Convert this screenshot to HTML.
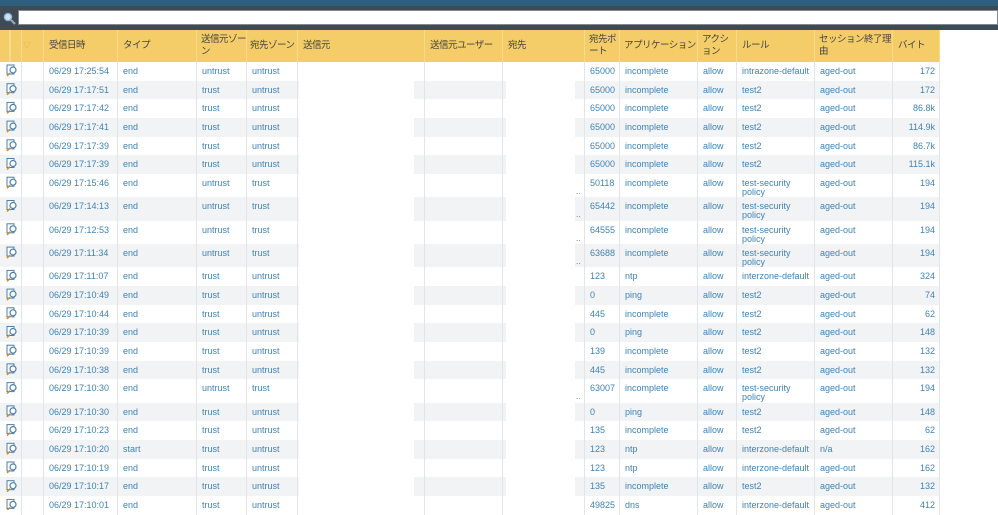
<!DOCTYPE html>
<html><head><meta charset="utf-8"><style>
*{margin:0;padding:0;box-sizing:border-box}
body{width:998px;height:510px;overflow:hidden;background:#fff;font-family:"Liberation Sans","Noto Sans CJK JP",sans-serif;position:relative}
.top{position:absolute;left:0;top:0;width:998px;height:8px;background:#2f5f80}
.bar{position:absolute;left:0;top:6px;width:998px;height:24px;background:#3e4a54}
.inp{position:absolute;left:18px;top:10px;width:980px;height:15px;background:#fff;border:1px solid #7f8a93}
.hdr{position:absolute;left:0;top:30px;width:940px;height:32px;background:#f4cd68;display:flex}
.hdr div{border-right:1px solid #f8dc8c;font-size:9.5px;letter-spacing:-0.5px;color:#444;padding:0 0 0 5px;line-height:12px;height:32px;display:flex;align-items:center;white-space:nowrap;overflow:hidden}
.row{display:flex;width:940px}
.row div{border-right:1px solid #e2e4e7;font-size:9px;color:#3f82b5;padding:0 0 0 5px;line-height:9px;padding-top:5px;overflow:visible;white-space:nowrap;position:relative}
.row.g{background:#f2f3f5}
.row div.r{text-align:right;padding-right:4px}
.tall{height:23.3px}.n{height:18.7px}
.w{position:absolute;top:62px;height:448px;background:#fff}
.dots{position:absolute;left:-9px;top:15px;color:#666;font-size:8px;line-height:6px}
</style></head><body>
<div class="top"></div><div class="bar"></div><div class="inp"></div>
<svg style="position:absolute;left:3px;top:12px" width="13" height="13" viewBox="0 0 13 13"><circle cx="5" cy="5" r="3.6" fill="#cfe3f3" stroke="#8fb6d6" stroke-width="1.4"/><line x1="8" y1="8" x2="12" y2="12" stroke="#9aa" stroke-width="2.2"/></svg>
<div class="hdr">
<div style="width:22px;padding:0"><span style="display:block;width:2px;height:32px;background:#f8dc8c;margin-left:9px"></span></div>
<div style="width:22px;color:#e8a940;font-size:8px;padding-left:1px">▽</div>
<div style="width:74px">受信日時</div><div style="width:79px">タイプ</div><div style="width:50px;padding-left:4px">送信元ゾー<br>ン</div><div style="width:51px;padding-left:3px">宛先ゾーン</div><div style="width:127px">送信元</div><div style="width:78px">送信元ユーザー</div><div style="width:82px">宛先</div><div style="width:35px;padding-left:4px">宛先ポ<br>ート</div><div style="width:78px;padding-left:4px">アプリケーション</div><div style="width:39px;padding-left:4px">アクシ<br>ョン</div><div style="width:78px">ルール</div><div style="width:78px;padding-left:4px">セッション終了理<br>由</div><div style="width:47px">バイト</div>
</div>
<div style="position:absolute;left:0;top:62px">
<div class="row n"><div style="width:22px"></div><div style="width:22px"></div><div style="width:74px">06/29 17:25:54</div><div style="width:79px">end</div><div style="width:50px">untrust</div><div style="width:51px">untrust</div><div style="width:127px"></div><div style="width:78px"></div><div style="width:82px"></div><div style="width:35px">65000</div><div style="width:78px">incomplete</div><div style="width:39px">allow</div><div style="width:78px">intrazone-default</div><div style="width:78px">aged-out</div><div style="width:47px" class="r">172</div></div>
<div class="row n g"><div style="width:22px"></div><div style="width:22px"></div><div style="width:74px">06/29 17:17:51</div><div style="width:79px">end</div><div style="width:50px">trust</div><div style="width:51px">untrust</div><div style="width:127px"></div><div style="width:78px"></div><div style="width:82px"></div><div style="width:35px">65000</div><div style="width:78px">incomplete</div><div style="width:39px">allow</div><div style="width:78px">test2</div><div style="width:78px">aged-out</div><div style="width:47px" class="r">172</div></div>
<div class="row n"><div style="width:22px"></div><div style="width:22px"></div><div style="width:74px">06/29 17:17:42</div><div style="width:79px">end</div><div style="width:50px">trust</div><div style="width:51px">untrust</div><div style="width:127px"></div><div style="width:78px"></div><div style="width:82px"></div><div style="width:35px">65000</div><div style="width:78px">incomplete</div><div style="width:39px">allow</div><div style="width:78px">test2</div><div style="width:78px">aged-out</div><div style="width:47px" class="r">86.8k</div></div>
<div class="row n g"><div style="width:22px"></div><div style="width:22px"></div><div style="width:74px">06/29 17:17:41</div><div style="width:79px">end</div><div style="width:50px">trust</div><div style="width:51px">untrust</div><div style="width:127px"></div><div style="width:78px"></div><div style="width:82px"></div><div style="width:35px">65000</div><div style="width:78px">incomplete</div><div style="width:39px">allow</div><div style="width:78px">test2</div><div style="width:78px">aged-out</div><div style="width:47px" class="r">114.9k</div></div>
<div class="row n"><div style="width:22px"></div><div style="width:22px"></div><div style="width:74px">06/29 17:17:39</div><div style="width:79px">end</div><div style="width:50px">trust</div><div style="width:51px">untrust</div><div style="width:127px"></div><div style="width:78px"></div><div style="width:82px"></div><div style="width:35px">65000</div><div style="width:78px">incomplete</div><div style="width:39px">allow</div><div style="width:78px">test2</div><div style="width:78px">aged-out</div><div style="width:47px" class="r">86.7k</div></div>
<div class="row n g"><div style="width:22px"></div><div style="width:22px"></div><div style="width:74px">06/29 17:17:39</div><div style="width:79px">end</div><div style="width:50px">trust</div><div style="width:51px">untrust</div><div style="width:127px"></div><div style="width:78px"></div><div style="width:82px"></div><div style="width:35px">65000</div><div style="width:78px">incomplete</div><div style="width:39px">allow</div><div style="width:78px">test2</div><div style="width:78px">aged-out</div><div style="width:47px" class="r">115.1k</div></div>
<div class="row tall"><div style="width:22px"></div><div style="width:22px"></div><div style="width:74px">06/29 17:15:46</div><div style="width:79px">end</div><div style="width:50px">untrust</div><div style="width:51px">trust</div><div style="width:127px"></div><div style="width:78px"></div><div style="width:82px"></div><div style="width:35px"><span class="dots">..</span>50118</div><div style="width:78px">incomplete</div><div style="width:39px">allow</div><div style="width:78px">test-security<br>policy</div><div style="width:78px">aged-out</div><div style="width:47px" class="r">194</div></div>
<div class="row tall g"><div style="width:22px"></div><div style="width:22px"></div><div style="width:74px">06/29 17:14:13</div><div style="width:79px">end</div><div style="width:50px">untrust</div><div style="width:51px">trust</div><div style="width:127px"></div><div style="width:78px"></div><div style="width:82px"></div><div style="width:35px"><span class="dots">..</span>65442</div><div style="width:78px">incomplete</div><div style="width:39px">allow</div><div style="width:78px">test-security<br>policy</div><div style="width:78px">aged-out</div><div style="width:47px" class="r">194</div></div>
<div class="row tall"><div style="width:22px"></div><div style="width:22px"></div><div style="width:74px">06/29 17:12:53</div><div style="width:79px">end</div><div style="width:50px">untrust</div><div style="width:51px">trust</div><div style="width:127px"></div><div style="width:78px"></div><div style="width:82px"></div><div style="width:35px"><span class="dots">..</span>64555</div><div style="width:78px">incomplete</div><div style="width:39px">allow</div><div style="width:78px">test-security<br>policy</div><div style="width:78px">aged-out</div><div style="width:47px" class="r">194</div></div>
<div class="row tall g"><div style="width:22px"></div><div style="width:22px"></div><div style="width:74px">06/29 17:11:34</div><div style="width:79px">end</div><div style="width:50px">untrust</div><div style="width:51px">trust</div><div style="width:127px"></div><div style="width:78px"></div><div style="width:82px"></div><div style="width:35px"><span class="dots">..</span>63688</div><div style="width:78px">incomplete</div><div style="width:39px">allow</div><div style="width:78px">test-security<br>policy</div><div style="width:78px">aged-out</div><div style="width:47px" class="r">194</div></div>
<div class="row n"><div style="width:22px"></div><div style="width:22px"></div><div style="width:74px">06/29 17:11:07</div><div style="width:79px">end</div><div style="width:50px">trust</div><div style="width:51px">untrust</div><div style="width:127px"></div><div style="width:78px"></div><div style="width:82px"></div><div style="width:35px">123</div><div style="width:78px">ntp</div><div style="width:39px">allow</div><div style="width:78px">interzone-default</div><div style="width:78px">aged-out</div><div style="width:47px" class="r">324</div></div>
<div class="row n g"><div style="width:22px"></div><div style="width:22px"></div><div style="width:74px">06/29 17:10:49</div><div style="width:79px">end</div><div style="width:50px">trust</div><div style="width:51px">untrust</div><div style="width:127px"></div><div style="width:78px"></div><div style="width:82px"></div><div style="width:35px">0</div><div style="width:78px">ping</div><div style="width:39px">allow</div><div style="width:78px">test2</div><div style="width:78px">aged-out</div><div style="width:47px" class="r">74</div></div>
<div class="row n"><div style="width:22px"></div><div style="width:22px"></div><div style="width:74px">06/29 17:10:44</div><div style="width:79px">end</div><div style="width:50px">trust</div><div style="width:51px">untrust</div><div style="width:127px"></div><div style="width:78px"></div><div style="width:82px"></div><div style="width:35px">445</div><div style="width:78px">incomplete</div><div style="width:39px">allow</div><div style="width:78px">test2</div><div style="width:78px">aged-out</div><div style="width:47px" class="r">62</div></div>
<div class="row n g"><div style="width:22px"></div><div style="width:22px"></div><div style="width:74px">06/29 17:10:39</div><div style="width:79px">end</div><div style="width:50px">trust</div><div style="width:51px">untrust</div><div style="width:127px"></div><div style="width:78px"></div><div style="width:82px"></div><div style="width:35px">0</div><div style="width:78px">ping</div><div style="width:39px">allow</div><div style="width:78px">test2</div><div style="width:78px">aged-out</div><div style="width:47px" class="r">148</div></div>
<div class="row n"><div style="width:22px"></div><div style="width:22px"></div><div style="width:74px">06/29 17:10:39</div><div style="width:79px">end</div><div style="width:50px">trust</div><div style="width:51px">untrust</div><div style="width:127px"></div><div style="width:78px"></div><div style="width:82px"></div><div style="width:35px">139</div><div style="width:78px">incomplete</div><div style="width:39px">allow</div><div style="width:78px">test2</div><div style="width:78px">aged-out</div><div style="width:47px" class="r">132</div></div>
<div class="row n g"><div style="width:22px"></div><div style="width:22px"></div><div style="width:74px">06/29 17:10:38</div><div style="width:79px">end</div><div style="width:50px">trust</div><div style="width:51px">untrust</div><div style="width:127px"></div><div style="width:78px"></div><div style="width:82px"></div><div style="width:35px">445</div><div style="width:78px">incomplete</div><div style="width:39px">allow</div><div style="width:78px">test2</div><div style="width:78px">aged-out</div><div style="width:47px" class="r">132</div></div>
<div class="row tall"><div style="width:22px"></div><div style="width:22px"></div><div style="width:74px">06/29 17:10:30</div><div style="width:79px">end</div><div style="width:50px">untrust</div><div style="width:51px">trust</div><div style="width:127px"></div><div style="width:78px"></div><div style="width:82px"></div><div style="width:35px"><span class="dots">..</span>63007</div><div style="width:78px">incomplete</div><div style="width:39px">allow</div><div style="width:78px">test-security<br>policy</div><div style="width:78px">aged-out</div><div style="width:47px" class="r">194</div></div>
<div class="row n g"><div style="width:22px"></div><div style="width:22px"></div><div style="width:74px">06/29 17:10:30</div><div style="width:79px">end</div><div style="width:50px">trust</div><div style="width:51px">untrust</div><div style="width:127px"></div><div style="width:78px"></div><div style="width:82px"></div><div style="width:35px">0</div><div style="width:78px">ping</div><div style="width:39px">allow</div><div style="width:78px">test2</div><div style="width:78px">aged-out</div><div style="width:47px" class="r">148</div></div>
<div class="row n"><div style="width:22px"></div><div style="width:22px"></div><div style="width:74px">06/29 17:10:23</div><div style="width:79px">end</div><div style="width:50px">trust</div><div style="width:51px">untrust</div><div style="width:127px"></div><div style="width:78px"></div><div style="width:82px"></div><div style="width:35px">135</div><div style="width:78px">incomplete</div><div style="width:39px">allow</div><div style="width:78px">test2</div><div style="width:78px">aged-out</div><div style="width:47px" class="r">62</div></div>
<div class="row n g"><div style="width:22px"></div><div style="width:22px"></div><div style="width:74px">06/29 17:10:20</div><div style="width:79px">start</div><div style="width:50px">trust</div><div style="width:51px">untrust</div><div style="width:127px"></div><div style="width:78px"></div><div style="width:82px"></div><div style="width:35px">123</div><div style="width:78px">ntp</div><div style="width:39px">allow</div><div style="width:78px">interzone-default</div><div style="width:78px">n/a</div><div style="width:47px" class="r">162</div></div>
<div class="row n"><div style="width:22px"></div><div style="width:22px"></div><div style="width:74px">06/29 17:10:19</div><div style="width:79px">end</div><div style="width:50px">trust</div><div style="width:51px">untrust</div><div style="width:127px"></div><div style="width:78px"></div><div style="width:82px"></div><div style="width:35px">123</div><div style="width:78px">ntp</div><div style="width:39px">allow</div><div style="width:78px">interzone-default</div><div style="width:78px">aged-out</div><div style="width:47px" class="r">162</div></div>
<div class="row n g"><div style="width:22px"></div><div style="width:22px"></div><div style="width:74px">06/29 17:10:17</div><div style="width:79px">end</div><div style="width:50px">trust</div><div style="width:51px">untrust</div><div style="width:127px"></div><div style="width:78px"></div><div style="width:82px"></div><div style="width:35px">135</div><div style="width:78px">incomplete</div><div style="width:39px">allow</div><div style="width:78px">test2</div><div style="width:78px">aged-out</div><div style="width:47px" class="r">132</div></div>
<div class="row n"><div style="width:22px"></div><div style="width:22px"></div><div style="width:74px">06/29 17:10:01</div><div style="width:79px">end</div><div style="width:50px">trust</div><div style="width:51px">untrust</div><div style="width:127px"></div><div style="width:78px"></div><div style="width:82px"></div><div style="width:35px">49825</div><div style="width:78px">dns</div><div style="width:39px">allow</div><div style="width:78px">interzone-default</div><div style="width:78px">aged-out</div><div style="width:47px" class="r">412</div></div>
</div>
<div class="w" style="left:299px;width:115px"></div>
<div class="w" style="left:506px;width:69px"></div>
<svg style="position:absolute;left:0;top:62px" width="22" height="448">
<defs><g id="i"><rect x="7" y="3" width="7" height="9" fill="#fff" stroke="#4a7fae" stroke-width="1"/><circle cx="13" cy="8" r="3" fill="#fff" stroke="#4a7fae" stroke-width="1.2"/><line x1="10" y1="11" x2="7" y2="14" stroke="#d08a2a" stroke-width="1.5"/></g></defs>
<use href="#i" y="0"/><use href="#i" y="18.7"/><use href="#i" y="37.4"/><use href="#i" y="56.1"/><use href="#i" y="74.8"/><use href="#i" y="93.5"/>
<use href="#i" y="112.2"/><use href="#i" y="135.5"/><use href="#i" y="158.8"/><use href="#i" y="182.1"/>
<use href="#i" y="205.4"/><use href="#i" y="224.1"/><use href="#i" y="242.8"/><use href="#i" y="261.5"/><use href="#i" y="280.2"/><use href="#i" y="298.9"/>
<use href="#i" y="317.6"/><use href="#i" y="340.9"/><use href="#i" y="359.6"/><use href="#i" y="378.3"/><use href="#i" y="397"/><use href="#i" y="415.7"/><use href="#i" y="434.4"/>
</svg>
</body></html>
